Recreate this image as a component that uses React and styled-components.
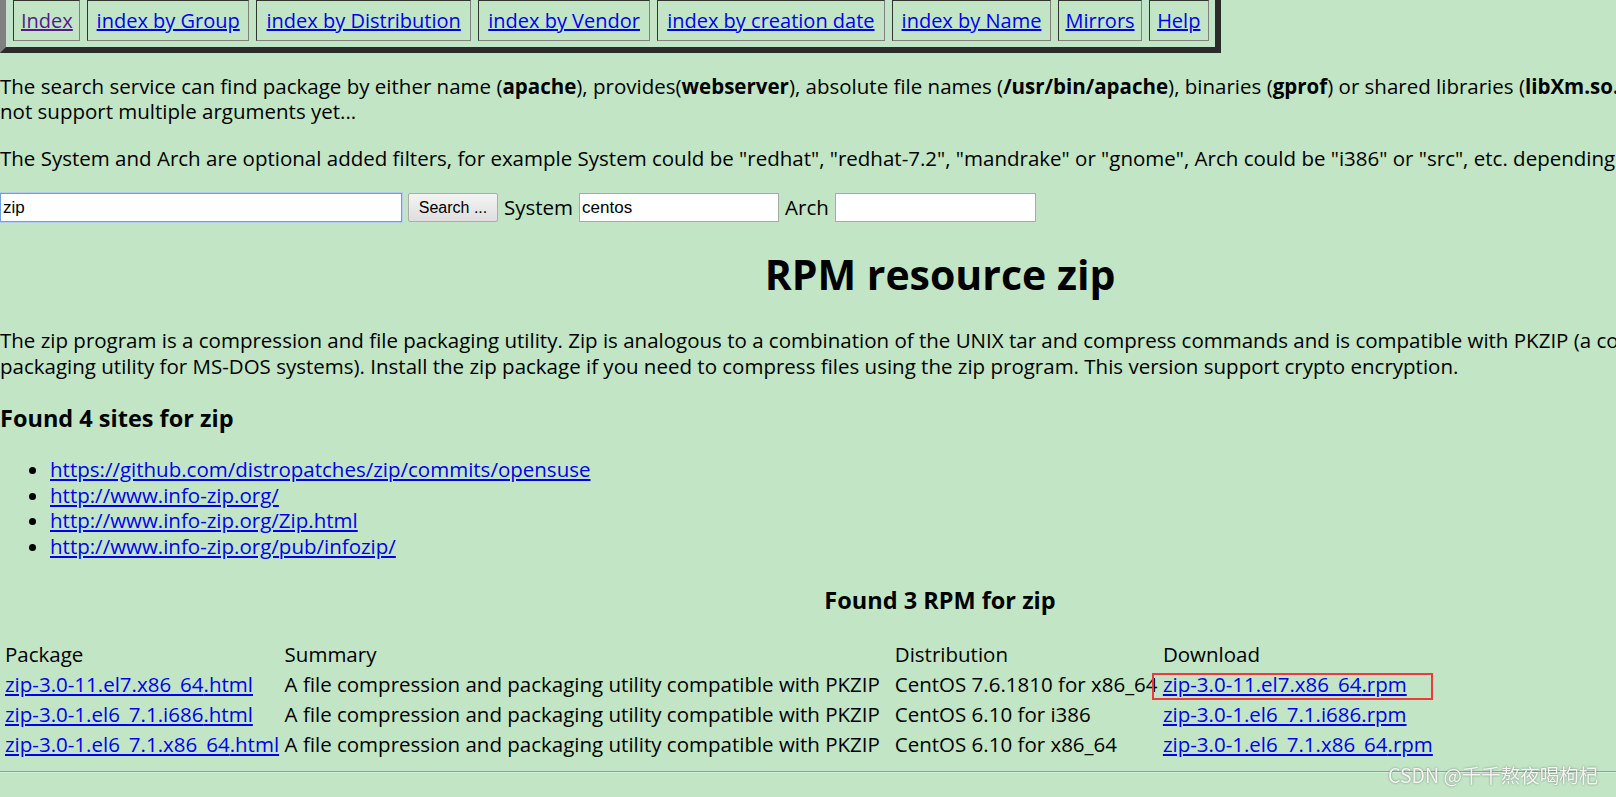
import React from 'react'
import styled, { createGlobalStyle } from 'styled-components'

const GlobalStyle = createGlobalStyle`
    html, body {
        margin: 0;
        padding: 0;
        overflow: hidden;
        background: #c1e5c5;
    }

    body {
        font-family: "Open Sans", "Noto Sans", sans-serif;
        font-size: 20.5px;
        color: #000;
    }

    a {
        color: #0000ee;
    }
`

const Page = styled.div`
    width: 1880px;
    height: 797px;
    overflow: hidden;
`

const MenuBar = styled.nav`
    display: inline-flex;
    gap: 6.7px;
    padding: 0 6px 6px 7.4px;
    border: 6px solid #2b2b2b;
    border-top: none;
    border-left-color: #808080;
`

const MenuCell = styled.div`
    box-sizing: border-box;
    width: ${props => props.$w}px;
    padding: 6px 0;
    font-size: 20px;
    line-height: 27px;
    text-align: center;
    white-space: nowrap;
    border: 1px solid;
    border-color: #333 #808080 #808080 #333;
`

const MenuLink = styled.a`
    color: ${props => (props.$visited ? '#551a8b' : '#0000ee')};
`

const Intro = styled.p`
    margin: ${props => props.$top}px 0 0;
    line-height: 25px;
    white-space: nowrap;
`

const SearchForm = styled.form`
    display: flex;
    align-items: center;
    gap: 6px;
    height: 29px;
    margin-top: 22px;
`

const TextInput = styled.input`
    box-sizing: border-box;
    width: ${props => props.$w}px;
    height: 29px;
    padding: 0 2px;
    font-family: "Liberation Sans", Arial, sans-serif;
    font-size: 17px;
    color: #000;
    background: #fff;
    border: 1px solid ${props => (props.$focus ? '#6a9fe2' : '#a9a9a9')};
    box-shadow: ${props => (props.$focus ? '0 0 0 1px #b3cdef' : 'none')};
    outline: none;
`

const SearchButton = styled.button`
    box-sizing: border-box;
    width: 90px;
    height: 29px;
    padding: 0;
    font-family: "Liberation Sans", Arial, sans-serif;
    font-size: 16px;
    color: #000;
    background: linear-gradient(#f4f4f4, #dedede);
    border: 1px solid #acacac;
    border-radius: 2px;
`

const FieldLabel = styled.span`
    line-height: 29px;
`

const Title = styled.h1`
    margin: 28px 0 0;
    font-size: 41px;
    line-height: 48px;
    text-align: center;
`

const Description = styled.p`
    margin: 29px 0 0;
    line-height: 26px;
    white-space: nowrap;
`

const SectionTitle = styled.h3`
    margin: ${props => props.$top}px 0 0;
    font-size: 23.5px;
    line-height: 30px;
    text-align: ${props => (props.$center ? 'center' : 'left')};
`

const SiteList = styled.ul`
    margin: 24px 0 0;
    padding-left: 50px;
    line-height: 25.5px;
`

const RpmTable = styled.table`
    margin-top: 24px;
    border-collapse: collapse;
    table-layout: fixed;
    width: 1458px;
`

const Row = styled.tr`
    height: 30px;
`

const Cell = styled.td`
    padding: 0 0 0 5px;
    line-height: 26px;
    white-space: nowrap;
    vertical-align: middle;
`

const Marked = styled.span`
    position: relative;
    display: inline-block;
`

const RedBox = styled.span`
    position: absolute;
    left: -11px;
    top: 2.5px;
    width: 281px;
    height: 27px;
    box-sizing: border-box;
    border: 2px solid #ec3a3f;
    pointer-events: none;
`

const Rule = styled.hr`
    margin: 12px 0 0;
    border: none;
    border-top: 1px solid #9b9b9b;
    border-bottom: 1px solid #d8eeda;
`

const Watermark = styled.div`
    position: fixed;
    left: 1388px;
    top: 763px;
    font-family: "Noto Sans CJK SC", "Noto Sans", sans-serif;
    font-size: 19.5px;
    line-height: 24px;
    color: rgba(255, 255, 255, 0.9);
    text-shadow: 0 0 2px rgba(90, 90, 90, 0.8);
    white-space: nowrap;
`

const menu = [
    { label: 'Index', w: 67, visited: true },
    { label: 'index by Group', w: 162.2 },
    { label: 'index by Distribution', w: 215.5 },
    { label: 'index by Vendor', w: 171.9 },
    { label: 'index by creation date', w: 228.3 },
    { label: 'index by Name', w: 159.6 },
    { label: 'Mirrors', w: 84.1 },
    { label: 'Help', w: 60 },
]

const sites = [
    'https://github.com/distropatches/zip/commits/opensuse',
    'http://www.info-zip.org/',
    'http://www.info-zip.org/Zip.html',
    'http://www.info-zip.org/pub/infozip/',
]

const summary = 'A file compression and packaging utility compatible with PKZIP'

const rpms = [
    { pkg: 'zip-3.0-11.el7.x86_64', dist: 'CentOS 7.6.1810 for x86_64', marked: true },
    { pkg: 'zip-3.0-1.el6_7.1.i686', dist: 'CentOS 6.10 for i386' },
    { pkg: 'zip-3.0-1.el6_7.1.x86_64', dist: 'CentOS 6.10 for x86_64' },
]

export default function App() {
    return (
        <Page>
            <GlobalStyle />
            <MenuBar>
                {menu.map(item => (
                    <MenuCell key={item.label} $w={item.w}>
                        <MenuLink href="#" $visited={item.visited}>{item.label}</MenuLink>
                    </MenuCell>
                ))}
            </MenuBar>

            <Intro $top={21}>
                The search service can find package by either name (<b>apache</b>), provides(<b>webserver</b>), absolute file names (<b>/usr/bin/apache</b>), binaries (<b>gprof</b>) or shared libraries (<b>libXm.so.2</b>) in standard path. It does
                <br />
                not support multiple arguments yet...
            </Intro>
            <Intro $top={22}>
                The System and Arch are optional added filters, for example System could be "redhat", "redhat-7.2", "mandrake" or "gnome", Arch could be "i386" or "src", etc. depending on your system.
            </Intro>

            <SearchForm onSubmit={e => e.preventDefault()}>
                <TextInput $w={402} $focus defaultValue="zip" />
                <SearchButton type="submit">Search ...</SearchButton>
                <FieldLabel>System</FieldLabel>
                <TextInput $w={200} defaultValue="centos" />
                <FieldLabel>Arch</FieldLabel>
                <TextInput $w={201} defaultValue="" />
            </SearchForm>

            <Title>RPM resource zip</Title>

            <Description>
                The zip program is a compression and file packaging utility. Zip is analogous to a combination of the UNIX tar and compress commands and is compatible with PKZIP (a compression and file
                <br />
                packaging utility for MS-DOS systems). Install the zip package if you need to compress files using the zip program. This version support crypto encryption.
            </Description>

            <SectionTitle $top={24}>Found 4 sites for zip</SectionTitle>
            <SiteList>
                {sites.map(site => (
                    <li key={site}><a href="#">{site}</a></li>
                ))}
            </SiteList>

            <SectionTitle $top={25.5} $center>Found 3 RPM for zip</SectionTitle>

            <RpmTable>
                <colgroup>
                    <col style={{ width: 279.5 }} />
                    <col style={{ width: 610 }} />
                    <col style={{ width: 268 }} />
                    <col style={{ width: 300 }} />
                </colgroup>
                <tbody>
                    <Row>
                        <Cell>Package</Cell>
                        <Cell>Summary</Cell>
                        <Cell>Distribution</Cell>
                        <Cell>Download</Cell>
                    </Row>
                    {rpms.map(rpm => (
                        <Row key={rpm.pkg}>
                            <Cell><a href="#">{rpm.pkg}.html</a></Cell>
                            <Cell>{summary}</Cell>
                            <Cell>{rpm.dist}</Cell>
                            <Cell>
                                {rpm.marked ? (
                                    <Marked>
                                        <a href="#">{rpm.pkg}.rpm</a>
                                        <RedBox />
                                    </Marked>
                                ) : (
                                    <a href="#">{rpm.pkg}.rpm</a>
                                )}
                            </Cell>
                        </Row>
                    ))}
                </tbody>
            </RpmTable>

            <Rule />
            <Watermark>CSDN @千千熬夜喝枸杞</Watermark>
        </Page>
    )
}
